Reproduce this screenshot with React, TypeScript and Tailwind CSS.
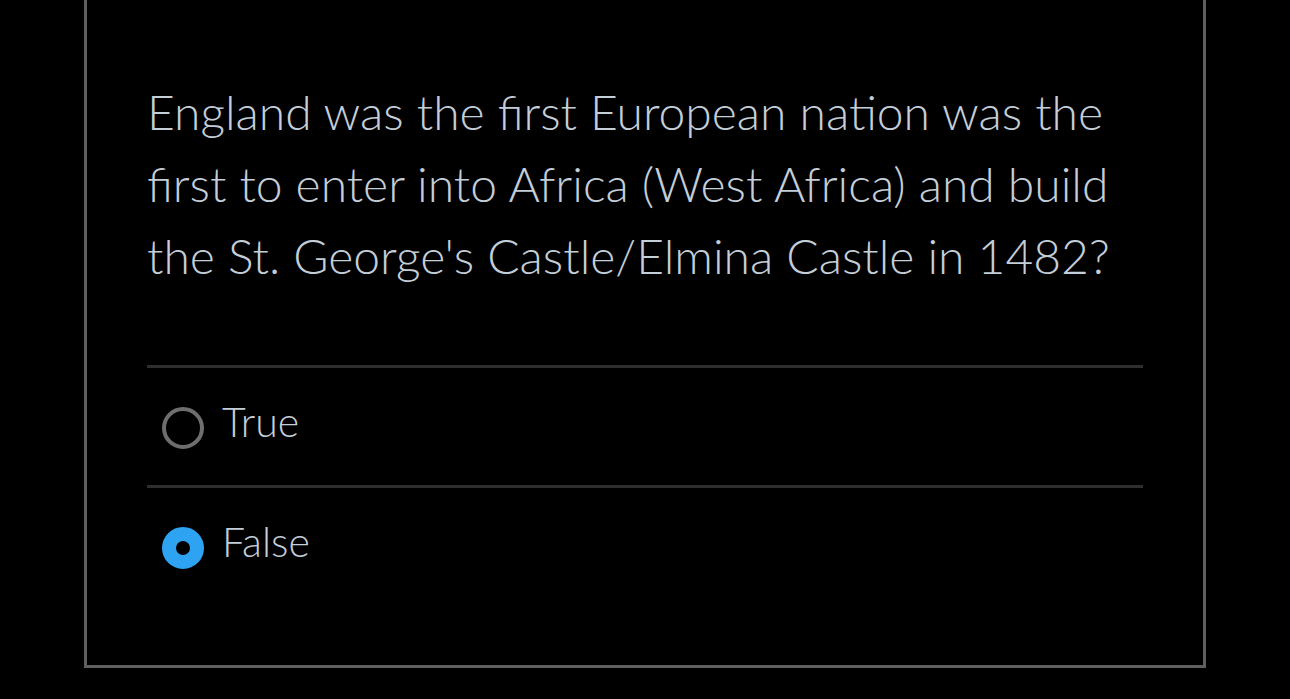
import React from "react";

export default function App() {
  return (
    <div className="min-h-[699px] w-full bg-black" style={{ fontFamily: "Lato, 'Open Sans', sans-serif" }}>
      <div className="ml-[84px] w-[1122px] border-x-[3px] border-b-[3px] border-[#5f5f5f] px-[60px] pt-[76px] pb-[60px]">
        <p className="text-[48px] leading-[72px] font-light text-[#c3ced8]">
          England was the first European nation was the first to enter into Africa (West Africa) and build the St. George's Castle/Elmina Castle in 1482?
        </p>
        <div className="mt-[73px]">
          <div className="flex h-[120px] items-center border-t-[3px] border-[#2e2e2e] pl-[15px] pt-[3px]">
            <span className="h-[42px] w-[42px] rounded-full border-[4px] border-[#6e6e6e]" />
            <span className="ml-[18px] pb-[14px] text-[41px] font-light text-[#c3ced8] leading-none">True</span>
          </div>
          <div className="flex h-[120px] items-center border-t-[3px] border-[#2e2e2e] pl-[15px] pt-[3px]">
            <span className="h-[42px] w-[42px] rounded-full border-[14px] border-[#2ea3f2] bg-black" />
            <span className="ml-[18px] pb-[14px] text-[41px] font-light text-[#c3ced8] leading-none">False</span>
          </div>
        </div>
      </div>
    </div>
  );
}
